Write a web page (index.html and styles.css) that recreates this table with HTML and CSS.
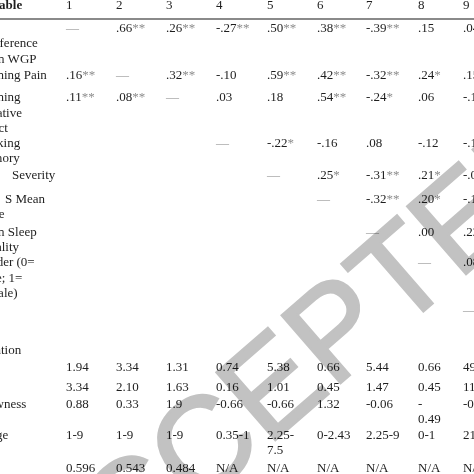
FILE: index.html
```html
<!DOCTYPE html>
<html>
<head>
<meta charset="utf-8">
<title>Correlation table</title>
<link rel="stylesheet" href="styles.css">
</head>
<body>
<div class="tbl">
  <div class="row head"><div class="lbl">Variable</div><div>1</div><div>2</div><div>3</div><div>4</div><div>5</div><div>6</div><div>7</div><div>8</div><div>9</div></div>
  <div class="row g0"><div class="lbl">Pain<br>Interference<br>Mean WGP</div><div><span class="d">—</span></div><div>.66<i>**</i></div><div>.26<i>**</i></div><div>-.27<i>**</i></div><div>.50<i>**</i></div><div>.38<i>**</i></div><div>-.39<i>**</i></div><div>.15</div><div>.04</div></div>
  <div class="row g1"><div class="lbl">Morning Pain</div><div>.16<i>**</i></div><div><span class="d">—</span></div><div>.32<i>**</i></div><div>-.10</div><div>.59<i>**</i></div><div>.42<i>**</i></div><div>-.32<i>**</i></div><div>.24<i>*</i></div><div>.15</div></div>
  <div class="row g7"><div class="lbl">Morning<br>Negative<br>Affect</div><div>.11<i>**</i></div><div>.08<i>**</i></div><div><span class="d">—</span></div><div>.03</div><div>.18</div><div>.54<i>**</i></div><div>-.24<i>*</i></div><div>.06</div><div>-.13</div></div>
  <div class="row g0"><div class="lbl">Working<br>Memory</div><div></div><div></div><div></div><div><span class="d">—</span></div><div>-.22<i>*</i></div><div>-.16</div><div>.08</div><div>-.12</div><div>-.17</div></div>
  <div class="row g1"><div class="lbl"><span class="ind-sev">Severity</span></div><div></div><div></div><div></div><div></div><div><span class="d">—</span></div><div>.25<i>*</i></div><div>-.31<i>**</i></div><div>.21<i>*</i></div><div>-.05</div></div>
  <div class="row g9"><div class="lbl"><span class="ind-s">S Mean</span><br>Score</div><div></div><div></div><div></div><div></div><div></div><div><span class="d">—</span></div><div>-.32<i>**</i></div><div>.20<i>*</i></div><div>-.14</div></div>
  <div class="row g2"><div class="lbl">Mean Sleep<br><span class="ind-q">Quality</span></div><div></div><div></div><div></div><div></div><div></div><div></div><div><span class="d">—</span></div><div>.00</div><div>.22</div></div>
  <div class="row g0"><div class="lbl">Gender (0=<br>Male; 1=<br>Female)</div><div></div><div></div><div></div><div></div><div></div><div></div><div></div><div><span class="d">—</span></div><div>.08</div></div>
  <div class="row g1"><div class="lbl">Age</div><div></div><div></div><div></div><div></div><div></div><div></div><div></div><div></div><div><span class="d">—</span></div></div>
  <div class="row g25"><div class="lbl">Location</div></div>
  <div class="row g2"><div class="lbl">M</div><div>1.94</div><div>3.34</div><div>1.31</div><div>0.74</div><div>5.38</div><div>0.66</div><div>5.44</div><div>0.66</div><div>49.53</div></div>
  <div class="row g5"><div class="lbl">SD</div><div>3.34</div><div>2.10</div><div>1.63</div><div>0.16</div><div>1.01</div><div>0.45</div><div>1.47</div><div>0.45</div><div>11.92</div></div>
  <div class="row g1"><div class="lbl">Skewness</div><div>0.88</div><div>0.33</div><div>1.9</div><div>-0.66</div><div>-0.66</div><div>1.32</div><div>-0.06</div><div>-<br>0.49</div><div>-0.24</div></div>
  <div class="row g0"><div class="lbl">Range</div><div>1-9</div><div>1-9</div><div>1-9</div><div>0.35-1</div><div>2.25-<br>7.5</div><div>0-2.43</div><div>2.25-9</div><div>0-1</div><div>21-75</div></div>
  <div class="row g3"><div class="lbl">α</div><div>0.596</div><div>0.543</div><div>0.484</div><div>N/A</div><div>N/A</div><div>N/A</div><div>N/A</div><div>N/A</div><div>N/A</div></div>
</div>
<div class="wm">ACCEPTED</div>
</body>
</html>
```

FILE: styles.css
```css
html, body {
  margin: 0;
  padding: 0;
  background: #ffffff;
}
body {
  width: 474px;
  height: 474px;
  overflow: hidden;
  position: relative;
  font-family: "Liberation Serif", "Times New Roman", serif;
  font-size: 13px;
  line-height: 15.3px;
  color: #1e1e1e;
}
.tbl {
  margin-left: -25px;
}
.row {
  display: grid;
  grid-template-columns: 91px 50px 50px 50px 51px 50px 49px 52px 45px 50px;
  white-space: nowrap;
}
.head {
  margin-top: -3px;
  padding-bottom: 5.7px;
  border-bottom: 2px solid #8a8a8a;
}
.head .lbl {
  font-weight: bold;
}
.row i {
  font-style: normal;
  color: #8c8c8c;
}
.d {
  color: #9a9a9a;
}
.g0 { padding-top: 0; }
.g1 { padding-top: 1.4px; }
.g2 { padding-top: 2.2px; }
.g3 { padding-top: 3.4px; }
.g5 { padding-top: 4.7px; }
.g7 { padding-top: 6.7px; }
.g9 { padding-top: 8.7px; }
.g25 { padding-top: 24.7px; }
.ind-sev { margin-left: 37px; }
.ind-s { margin-left: 30px; }
.ind-q { margin-left: 5px; }
.wm {
  position: absolute;
  left: 60px;
  top: 517px;
  font-family: "Liberation Sans", Arial, sans-serif;
  font-size: 130px;
  line-height: 1;
  color: #c2c2c2;
  -webkit-text-stroke: 2.5px #c2c2c2;
  mix-blend-mode: multiply;
  transform-origin: 0 110px;
  transform: rotate(-41deg);
  white-space: nowrap;
  pointer-events: none;
}
```
